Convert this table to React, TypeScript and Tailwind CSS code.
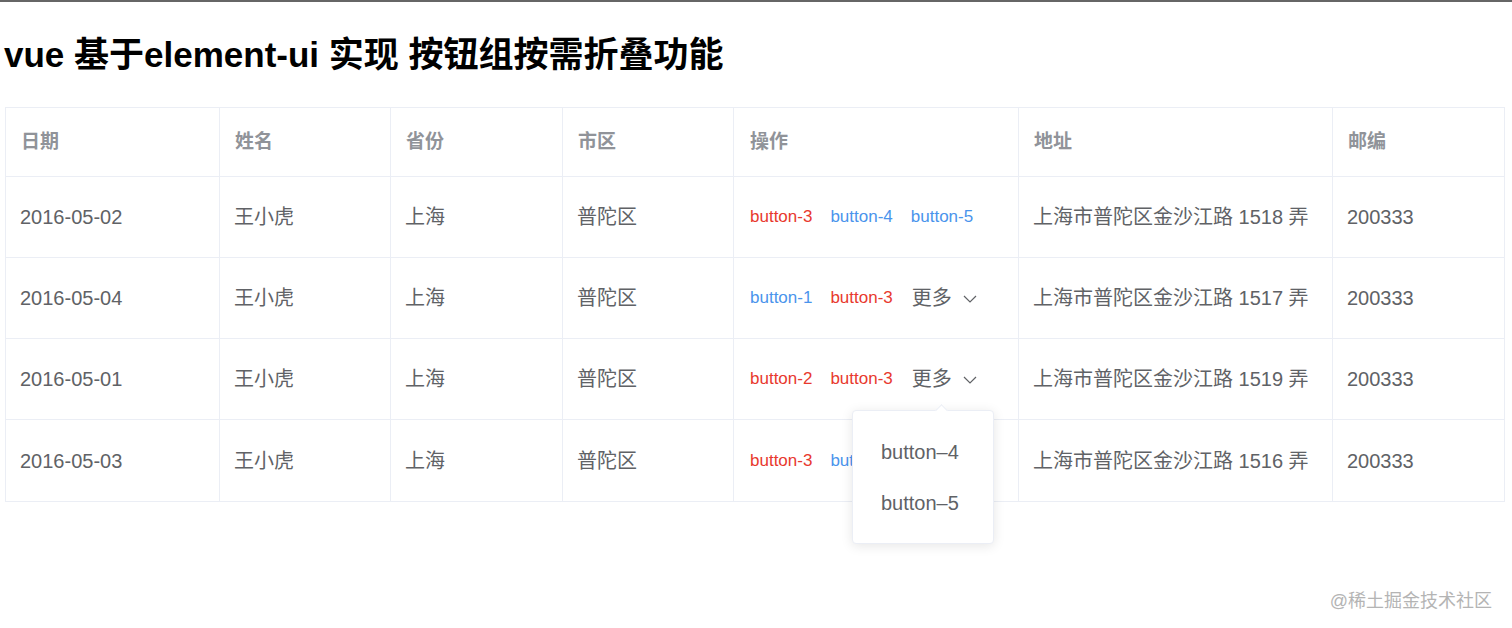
import React from 'react'

const FONT = { fontFamily: '"Liberation Sans", "Noto Sans CJK SC", sans-serif' }

type Btn = { label: string; tone: 'red' | 'blue' }

interface Row {
  date: string
  name: string
  province: string
  city: string
  address: string
  zip: string
  buttons: Btn[]
  more?: boolean
}

const rows: Row[] = [
  {
    date: '2016-05-02',
    name: '王小虎',
    province: '上海',
    city: '普陀区',
    address: '上海市普陀区金沙江路 1518 弄',
    zip: '200333',
    buttons: [
      { label: 'button-3', tone: 'red' },
      { label: 'button-4', tone: 'blue' },
      { label: 'button-5', tone: 'blue' },
    ],
  },
  {
    date: '2016-05-04',
    name: '王小虎',
    province: '上海',
    city: '普陀区',
    address: '上海市普陀区金沙江路 1517 弄',
    zip: '200333',
    buttons: [
      { label: 'button-1', tone: 'blue' },
      { label: 'button-3', tone: 'red' },
    ],
    more: true,
  },
  {
    date: '2016-05-01',
    name: '王小虎',
    province: '上海',
    city: '普陀区',
    address: '上海市普陀区金沙江路 1519 弄',
    zip: '200333',
    buttons: [
      { label: 'button-2', tone: 'red' },
      { label: 'button-3', tone: 'red' },
    ],
    more: true,
  },
  {
    date: '2016-05-03',
    name: '王小虎',
    province: '上海',
    city: '普陀区',
    address: '上海市普陀区金沙江路 1516 弄',
    zip: '200333',
    buttons: [
      { label: 'button-3', tone: 'red' },
      { label: 'button-4', tone: 'blue' },
      { label: 'button-5', tone: 'blue' },
    ],
  },
]

const headers = ['日期', '姓名', '省份', '市区', '操作', '地址', '邮编']

function ArrowDown() {
  return (
    <svg width="14" height="8" viewBox="0 0 14 8" fill="none" className="ml-[11px] mt-[1px]">
      <polyline points="1,1 7,7 13,1" stroke="#606266" strokeWidth="1.2" fill="none" />
    </svg>
  )
}

function Actions({ row }: { row: Row }) {
  return (
    <div className="flex items-center gap-[18px] text-[17px]">
      {row.buttons.map((b, i) => (
        <span key={i} className={b.tone === 'red' ? 'text-[#e8392e]' : 'text-[#4a94ec]'}>
          {b.label}
        </span>
      ))}
      {row.more && (
        <span className="ml-[1px] flex items-center text-[20px] text-[#606266]">
          更多
          <ArrowDown />
        </span>
      )}
    </div>
  )
}

export default function App() {
  return (
    <div className="relative h-[628px] w-[1512px] overflow-hidden border-t-2 border-[#666] bg-white" style={FONT}>
      <h1 className="mt-[33px] pl-[4px] text-[35px] font-bold leading-[40px] text-black">
        vue 基于element-ui 实现 按钮组按需折叠功能
      </h1>

      <div className="relative ml-[5px] mt-[32px] w-[1500px] border border-[#ebeef5]">
        <div className="grid grid-cols-[214px_171px_172px_171px_285px_314px_1fr]">
          {headers.map((h, i) => (
            <div
              key={h}
              className={`flex h-[69px] items-center border-b border-[#ebeef5] text-[19px] font-bold text-[#909399] ${
                i === 4 ? 'pl-4' : 'pl-[15px]'
              } ${i < headers.length - 1 ? 'border-r' : ''}`}
            >
              {h}
            </div>
          ))}
          {rows.map((r, ri) => {
            const last = ri === rows.length - 1
            const cell = `flex h-[81px] items-center text-[20px] text-[#606266] border-[#ebeef5] ${
              last ? '' : 'border-b'
            }`
            return (
              <React.Fragment key={ri}>
                <div className={`${cell} border-r pl-[14px]`}>{r.date}</div>
                <div className={`${cell} border-r pl-[14px]`}>{r.name}</div>
                <div className={`${cell} border-r pl-[14px]`}>{r.province}</div>
                <div className={`${cell} border-r pl-[14px]`}>{r.city}</div>
                <div className={`${cell} border-r pl-4`}>
                  <Actions row={r} />
                </div>
                <div className={`${cell} border-r pl-[14px]`}>{r.address}</div>
                <div className={`${cell} pl-[14px]`}>{r.zip}</div>
              </React.Fragment>
            )
          })}
        </div>

        {/* dropdown menu opened from the third row */}
        <div className="absolute left-[846px] top-[302px] w-[142px] rounded-[4px] border border-[#ebeef5] bg-white py-[15px] shadow-[0_2px_12px_0_rgba(0,0,0,0.1)]">
          <div className="absolute -top-[5px] left-[84px] h-[9px] w-[9px] rotate-45 border-l border-t border-[#ebeef5] bg-white" />
          <div className="flex h-[51px] items-center pl-[28px] text-[20px] text-[#606266]">button–4</div>
          <div className="flex h-[51px] items-center pl-[28px] text-[20px] text-[#606266]">button–5</div>
        </div>
      </div>

      <div className="mt-[86px] flex justify-end pr-[20px] text-[18px] text-[#b4b4b4]">@稀土掘金技术社区</div>
    </div>
  )
}
